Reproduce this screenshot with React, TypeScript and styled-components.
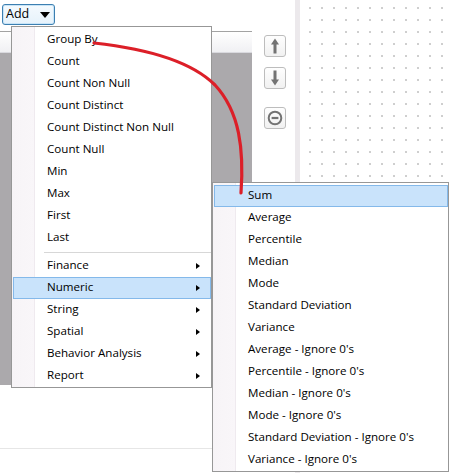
import React from "react";
import styled, { createGlobalStyle } from "styled-components";

const GlobalStyle = createGlobalStyle`
  html, body { margin: 0; padding: 0; background: #ffffff; }
  body { font-family: "Open Sans", "Noto Sans", "DejaVu Sans", sans-serif; }
  #root { width: 451px; height: 473px; }
`;

const Screen = styled.div`
  position: relative;
  width: 451px;
  height: 473px;
  overflow: hidden;
  display: flex;
  background: #ffffff;
  font-size: 11.6px;
  color: #000;
`;

const LeftPane = styled.div`
  width: 295px;
  display: flex;
  flex-direction: column;
`;

const Toolbar = styled.div`
  height: 31px;
  box-sizing: border-box;
  padding: 4px 0 0 2px;
`;

const AddButton = styled.div`
  width: 53px;
  height: 21px;
  box-sizing: border-box;
  border: 1px solid #3c7fb1;
  border-radius: 3px;
  box-shadow: inset 0 0 0 1px #c8e4f7;
  background: linear-gradient(#f4fafe, #e6f2fb);
  display: flex;
  align-items: center;
  justify-content: space-between;
  padding: 0 4px 1px 3px;
  font-size: 12.5px;
  line-height: 18px;
`;

const DownCaret = styled.span`
  width: 0;
  height: 0;
  border-left: 5px solid transparent;
  border-right: 5px solid transparent;
  border-top: 6px solid #000;
  margin-top: 2px;
`;

const Workspace = styled.div`
  height: 354px;
  display: flex;
`;

const ListPanel = styled.div`
  width: 252px;
  display: flex;
  flex-direction: column;
  border-top: 1px solid #a3a3a3;
`;

const ListHeader = styled.div`
  height: 20px;
  background: linear-gradient(#ffffff, #f0f0f3);
  border-bottom: 1px solid #d9d9de;
`;

const ListBody = styled.div`
  flex: 1;
  background: #aba9ac;
`;

const ButtonColumn = styled.div`
  flex: 1;
  display: flex;
  flex-direction: column;
  align-items: flex-start;
  padding: 4px 0 0 12px;
`;

const ToolButton = styled.div<{ $gap: number }>`
  width: 22px;
  height: 22px;
  box-sizing: border-box;
  margin-top: ${(p) => p.$gap}px;
  border: 1px solid #bdbdbd;
  border-radius: 3px;
  background: linear-gradient(#fefefe, #f1f1f1);
  display: flex;
  align-items: center;
  justify-content: center;
`;

const FooterArea = styled.div`
  flex: 1;
  display: flex;
  flex-direction: column;
  padding-top: 63px;
`;

const StatusStrip = styled.div`
  flex: 1;
  border-top: 1px solid #e6e6e6;
`;

const Splitter = styled.div`
  width: 5px;
  background: #ece9ec;
`;

const Canvas = styled.div`
  flex: 1;
  background-color: #ffffff;
  background-image: radial-gradient(circle, #b4b4b4 0.6px, transparent 0.9px);
  background-size: 12px 12px;
  background-position: 4px 2px;
`;

const MenuPanel = styled.div<{ $left: number; $top: number; $width: number }>`
  position: absolute;
  left: ${(p) => p.$left}px;
  top: ${(p) => p.$top}px;
  width: ${(p) => p.$width}px;
  box-sizing: border-box;
  border: 1px solid #979797;
  padding: 2px 0 0 1px;
  background: linear-gradient(
    to right,
    #f7f4f7 0,
    #f9f6f9 22px,
    #efeaef 22px,
    #efeaef 23px,
    #ffffff 23px
  );
  display: flex;
  flex-direction: column;
`;

const MenuItem = styled.div<{ $active?: boolean }>`
  height: 22px;
  box-sizing: border-box;
  display: flex;
  align-items: center;
  justify-content: space-between;
  padding: 0 10px 2px 33px;
  line-height: 18px;
  white-space: nowrap;
  border: 1px solid ${(p) => (p.$active ? "#84b9ea" : "transparent")};
  background: ${(p) => (p.$active ? "#c9e3fb" : "transparent")};
`;

const SubArrow = styled.span`
  width: 0;
  height: 0;
  margin-top: 2px;
  border-top: 3.5px solid transparent;
  border-bottom: 3.5px solid transparent;
  border-left: 4px solid #000;
`;

const MenuSeparator = styled.div`
  height: 6px;
  display: flex;
  align-items: center;
  padding-left: 31px;
  &::after {
    content: "";
    flex: 1;
    height: 1px;
    background: #d7d7d7;
  }
`;

const Annotation = styled.svg`
  position: absolute;
  left: 0;
  top: 0;
  pointer-events: none;
`;

const mainItems = [
  "Group By",
  "Count",
  "Count Non Null",
  "Count Distinct",
  "Count Distinct Non Null",
  "Count Null",
  "Min",
  "Max",
  "First",
  "Last",
];

const subMenus = ["Finance", "Numeric", "String", "Spatial", "Behavior Analysis", "Report"];

const numericItems = [
  "Sum",
  "Average",
  "Percentile",
  "Median",
  "Mode",
  "Standard Deviation",
  "Variance",
  "Average - Ignore 0's",
  "Percentile - Ignore 0's",
  "Median - Ignore 0's",
  "Mode - Ignore 0's",
  "Standard Deviation - Ignore 0's",
  "Variance - Ignore 0's",
];

const iconGray = "#737373";

const UpIcon = () => (
  <svg width="20" height="20" viewBox="0 0 20 20">
    <polygon points="10,2.5 6,8.5 14,8.5" fill={iconGray} />
    <rect x="8.5" y="8" width="3" height="9.5" fill={iconGray} />
  </svg>
);

const DownIcon = () => (
  <svg width="20" height="20" viewBox="0 0 20 20">
    <rect x="8.5" y="2.5" width="3" height="9.5" fill={iconGray} />
    <polygon points="10,17.5 6,11.5 14,11.5" fill={iconGray} />
  </svg>
);

const MinusCircleIcon = () => (
  <svg width="20" height="20" viewBox="0 0 20 20">
    <circle cx="10" cy="10" r="6.3" fill="none" stroke={iconGray} strokeWidth="2" />
    <line x1="6.6" y1="10" x2="13.4" y2="10" stroke={iconGray} strokeWidth="2.2" />
  </svg>
);

export default function App() {
  return (
    <>
      <GlobalStyle />
      <Screen>
        <LeftPane>
          <Toolbar>
            <AddButton>
              <span>Add</span>
              <DownCaret />
            </AddButton>
          </Toolbar>
          <Workspace>
            <ListPanel>
              <ListHeader />
              <ListBody />
            </ListPanel>
            <ButtonColumn>
              <ToolButton $gap={0}>
                <UpIcon />
              </ToolButton>
              <ToolButton $gap={10}>
                <DownIcon />
              </ToolButton>
              <ToolButton $gap={18}>
                <MinusCircleIcon />
              </ToolButton>
            </ButtonColumn>
          </Workspace>
          <FooterArea>
            <StatusStrip />
          </FooterArea>
        </LeftPane>
        <Splitter />
        <Canvas />

        <MenuPanel $left={11} $top={26} $width={201}>
          {mainItems.map((t) => (
            <MenuItem key={t}>
              <span>{t}</span>
            </MenuItem>
          ))}
          <MenuSeparator />
          {subMenus.map((t) => (
            <MenuItem key={t} $active={t === "Numeric"}>
              <span>{t}</span>
              <SubArrow />
            </MenuItem>
          ))}
        </MenuPanel>

        <MenuPanel $left={212} $top={182} $width={237}>
          {numericItems.map((t) => (
            <MenuItem key={t} $active={t === "Sum"}>
              <span>{t}</span>
            </MenuItem>
          ))}
        </MenuPanel>

        <Annotation width="451" height="473" viewBox="0 0 451 473">
          <path
            d="M94,43 C140,48 190,60 215,85 C240,112 244,150 241,193"
            fill="none"
            stroke="#dc1f28"
            strokeWidth="3.2"
            strokeLinecap="round"
          />
        </Annotation>
      </Screen>
    </>
  );
}
